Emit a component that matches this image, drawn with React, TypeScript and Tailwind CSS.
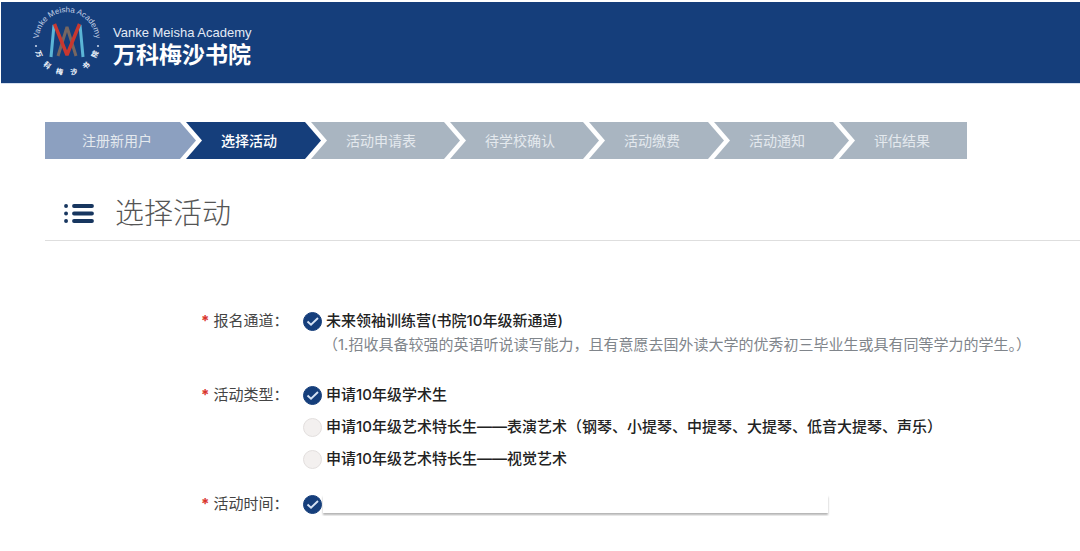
import React, { useState } from "react";
import clsx from "clsx";

const steps = [
  "注册新用户",
  "选择活动",
  "活动申请表",
  "待学校确认",
  "活动缴费",
  "活动通知",
  "评估结果",
];

const currentStep = 1;

const activityTypes = [
  "申请10年级学术生",
  "申请10年级艺术特长生——表演艺术（钢琴、小提琴、中提琴、大提琴、低音大提琴、声乐）",
  "申请10年级艺术特长生——视觉艺术",
];

const sealCharacters = [
  { char: "万", angle: 67 },
  { char: "科", angle: 40 },
  { char: "梅", angle: 14 },
  { char: "沙", angle: -13 },
  { char: "书", angle: -39 },
  { char: "院", angle: -66 },
];

const Logo: React.FC = () => (
  <svg
    viewBox="0 0 74 76"
    className="h-[76px] w-[74px] shrink-0"
    role="img"
    aria-label="Vanke Meisha Academy"
  >
    <defs>
      <path id="seal-arc" d="M9 42 A28.5 28.5 0 1 1 65 42" />
    </defs>
    <text
      fill="#c3d0e6"
      fontSize="8"
      textAnchor="middle"
      fontFamily="Liberation Sans, sans-serif"
    >
      <textPath href="#seal-arc" startOffset="50%">
        Vanke Meisha Academy
      </textPath>
    </text>
    <circle cx="6" cy="42" r="1.1" fill="#c3d0e6" />
    <circle cx="68" cy="42" r="1.1" fill="#c3d0e6" />
    {sealCharacters.map(({ char, angle }) => (
      <text
        key={char}
        transform={`rotate(${angle} 37 38)`}
        x="37"
        y="71"
        fill="#e6edf7"
        fontSize="7"
        fontWeight="900"
        textAnchor="middle"
        fontFamily="Noto Sans CJK SC, sans-serif"
      >
        {char}
      </text>
    ))}
    <g fill="none" strokeWidth="3">
      <path d="M28 52 L37 23 L46 52" stroke="#776660" strokeLinejoin="bevel" />
      <path d="M24 21 L21 53" stroke="#5bb5d6" />
      <path d="M50 21 L53 53" stroke="#5bb5d6" />
      <path
        d="M24.5 20 L37 51 L49.5 20"
        stroke="#c9372f"
        strokeWidth="3.4"
        strokeLinejoin="bevel"
      />
    </g>
  </svg>
);

const StepArrow: React.FC<{ className: string }> = ({ className }) => (
  <svg
    viewBox="0 0 22 37"
    className={clsx("absolute top-0 left-full z-10 -ml-1 h-[37px] w-[22px]", className)}
    aria-hidden="true"
  >
    <path d="M0 0 H6 L22 18.5 L6 37 H0 Z" fill="#fff" />
    <path d="M0 0 L16 18.5 L0 37 Z" fill="currentColor" />
  </svg>
);

const Steps: React.FC = () => (
  <ol className="flex text-sm text-[#e4e9ee]">
    {steps.map((step, index) => (
      <li
        key={step}
        aria-current={index === currentStep ? "step" : undefined}
        className={clsx(
          "relative flex h-[37px] items-center pl-[37px] whitespace-nowrap",
          index === steps.length - 1 ? "pr-[37px]" : "pr-8",
          index < currentStep && "bg-[#8ca0c0]",
          index === currentStep && "bg-[#153e7b] font-medium text-white",
          index > currentStep && "bg-[#a9b5c1]"
        )}
      >
        {step}
        {index < steps.length - 1 && (
          <StepArrow
            className={clsx(
              index < currentStep && "text-[#8ca0c0]",
              index === currentStep && "text-[#153e7b]",
              index > currentStep && "text-[#a9b5c1]"
            )}
          />
        )}
      </li>
    ))}
  </ol>
);

const ListIcon: React.FC = () => (
  <svg viewBox="0 0 32 20" className="h-5 w-8" aria-hidden="true">
    <g stroke="#17365f" strokeWidth="3.8" strokeLinecap="round">
      <path d="M11 2 H29 M11 9.5 H29 M11 17 H29" />
      <path d="M3 2 H3.1 M3 9.5 H3.1 M3 17 H3.1" />
    </g>
  </svg>
);

type RoundOptionProps = {
  name: string;
  label: string;
  checked: boolean;
  onChange: () => void;
  hideLabel?: boolean;
};

const RoundOption: React.FC<RoundOptionProps> = ({
  name,
  label,
  checked,
  onChange,
  hideLabel,
}) => (
  <label className="flex items-center gap-1">
    <span className="grid shrink-0 place-items-center">
      <input
        type="radio"
        name={name}
        aria-label={hideLabel ? label : undefined}
        checked={checked}
        onChange={onChange}
        className="col-start-1 row-start-1 size-[19px] appearance-none rounded-full border border-[#e3dfde] bg-[#f3f0ef] checked:border-[#153e7b] checked:bg-[#153e7b]"
      />
      {checked && (
        <svg
          viewBox="0 0 19 19"
          className="pointer-events-none col-start-1 row-start-1 size-[19px]"
          aria-hidden="true"
        >
          <path
            d="M4.5 9.5 L8 12.8 L15 6"
            fill="none"
            stroke="#d5e2f4"
            strokeWidth="1.9"
          />
        </svg>
      )}
    </span>
    {!hideLabel && <span className="font-medium text-[#222]">{label}</span>}
  </label>
);

const FormRow: React.FC<{ label: string; children: React.ReactNode }> = ({
  label,
  children,
}) => (
  <div role="group" aria-label={label} className="flex items-start">
    <div className="w-[258px] shrink-0 pl-[156px] whitespace-nowrap">
      <span className="mr-1 font-bold text-[#d9342b]">*</span>
      {label}：
    </div>
    <div className="min-w-0 grow">{children}</div>
  </div>
);

const App: React.FC = () => {
  const [activityType, setActivityType] = useState(0);
  const [time, setTime] = useState("");

  return (
    <div className="bg-white pt-[2px] pl-px font-[Inter,'Noto_Sans_CJK_SC',sans-serif] text-[#444]">
      <header className="flex h-[82px] items-start border-b border-[#d5dfee] bg-[#153e7b] pt-[2px] pl-[29px] text-white">
        <Logo />
        <div className="pt-[21px] pl-[9px]">
          <p className="font-['Liberation_Sans',sans-serif] text-[13px] leading-4 text-[#e3eaf5]">
            Vanke Meisha Academy
          </p>
          <p className="text-[23px] leading-7 font-bold">万科梅沙书院</p>
        </div>
      </header>

      <main className="pt-[38px] pl-11">
        <Steps />

        <div className="mt-7 flex h-[54px] items-center gap-5 border-b border-[#dedede] pl-[18px]">
          <ListIcon />
          <h1 className="text-[29px] leading-10 font-light text-[#555]">
            选择活动
          </h1>
        </div>

        <form className="pt-[68px] text-[15px] leading-6">
          <FormRow label="报名通道">
            <RoundOption
              name="channel"
              label="未来领袖训练营(书院10年级新通道)"
              checked
              onChange={() => {}}
            />
            <p className="pl-5 whitespace-nowrap text-[#80858b]">
              （1.招收具备较强的英语听说读写能力，且有意愿去国外读大学的优秀初三毕业生或具有同等学力的学生。）
            </p>
          </FormRow>

          <div className="mt-[26px]">
            <FormRow label="活动类型">
              <div className="flex flex-col gap-2">
                {activityTypes.map((type, index) => (
                  <RoundOption
                    key={type}
                    name="activityType"
                    label={type}
                    checked={activityType === index}
                    onChange={() => setActivityType(index)}
                  />
                ))}
              </div>
            </FormRow>
          </div>

          <div className="mt-[21px]">
            <FormRow label="活动时间">
              <div className="flex h-6 items-center">
                <RoundOption
                  name="time"
                  label="活动时间"
                  checked
                  onChange={() => {}}
                  hideLabel
                />
                <input
                  type="text"
                  aria-label="活动时间"
                  value={time}
                  onChange={(e) => setTime(e.target.value)}
                  className="ml-px h-[18px] w-[505px] bg-white px-2 shadow-[0_2px_2px_rgba(0,0,0,0.3)] outline-none"
                />
              </div>
            </FormRow>
          </div>
        </form>
      </main>
    </div>
  );
};

export default App;
